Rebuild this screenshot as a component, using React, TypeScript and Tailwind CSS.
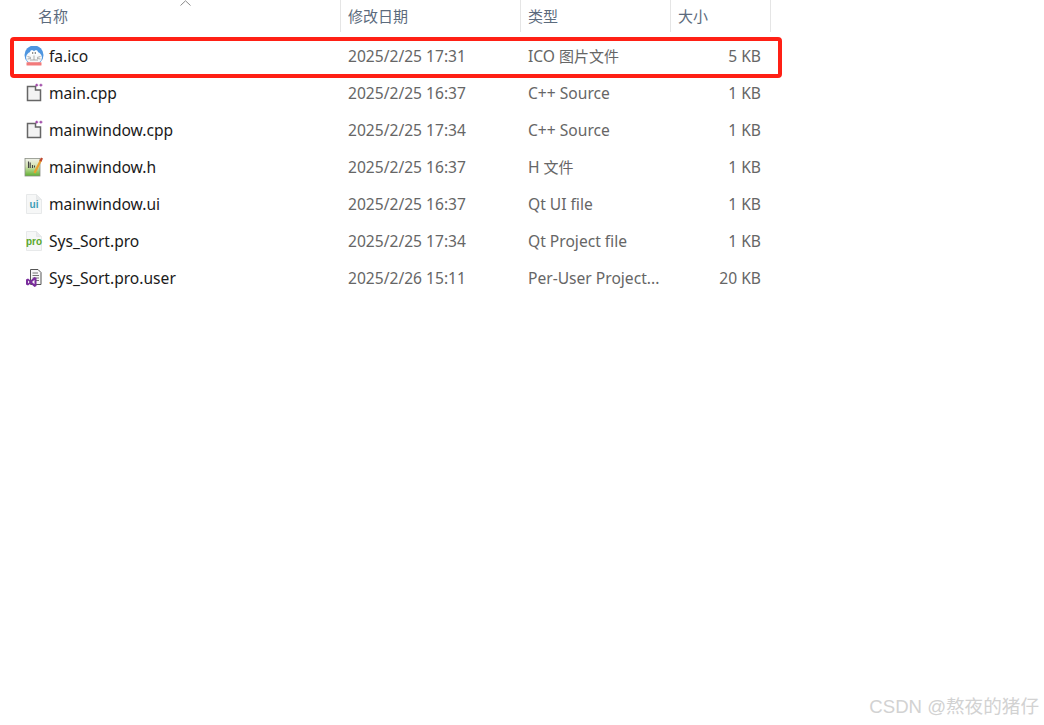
function DoraemonIcon() {
  return (
    <svg width="20" height="20" viewBox="0 0 20 20">
      <circle cx="10" cy="9" r="9.5" fill="#4f96e0" />
      <ellipse cx="10" cy="11.5" rx="8" ry="6.5" fill="#f7f8f9" />
      <ellipse cx="8" cy="6.5" rx="2" ry="2.6" fill="#fff" />
      <ellipse cx="12" cy="6.5" rx="2" ry="2.6" fill="#fff" />
      <circle cx="8.7" cy="7" r="0.7" fill="#444" />
      <circle cx="11.3" cy="7" r="0.7" fill="#444" />
      <path d="M3.5 10.5 7 11.5M3.5 13 7 12.5M13 11.5 16.5 10.5M13 12.5 16.5 13M10 9.5V14M6 14H14" stroke="#9a9a9a" strokeWidth="0.8" fill="none" />
      <rect x="2.5" y="16.2" width="15" height="3.3" rx="0.6" fill="#f27a7a" />
    </svg>
  )
}

function CppIcon() {
  return (
    <svg width="20" height="20" viewBox="0 0 20 20">
      <path d="M3.5 3.5H11.5V7H16.5V17.5H3.5Z" fill="#f3f3f3" stroke="#666666" strokeWidth="1.5" />
      <path d="M11.2 2.2H14.2M12.7 .8V3.6M15.4 2.2H18.4M16.9 .8V3.6" stroke="#a04aa8" strokeWidth="1.3" fill="none" />
    </svg>
  )
}

function HeaderFileIcon() {
  return (
    <svg width="20" height="20" viewBox="0 0 20 20">
      <defs>
        <linearGradient id="hgrad" x1="0" y1="0" x2="0" y2="1">
          <stop offset="0" stopColor="#f0f1ea" />
          <stop offset="0.45" stopColor="#d3e3b0" />
          <stop offset="1" stopColor="#5fb030" />
        </linearGradient>
      </defs>
      <rect x="1" y="1.5" width="15" height="17.5" fill="url(#hgrad)" stroke="#8a8f86" strokeWidth="0.8" />
      <path d="M4.5 4.5V11M6.2 5.5V11M8.5 8V11M10.5 8.5V10.5" stroke="#444" strokeWidth="1.1" fill="none" />
      <path d="M10.5 16 17 3" stroke="#e9a030" strokeWidth="2.2" fill="none" />
      <path d="M16.4 4.2 18 1" stroke="#c0492f" strokeWidth="2.2" fill="none" />
    </svg>
  )
}

function PageIcon({ label, color, size, width }: { label: string; color: string; size: number; width: number }) {
  return (
    <svg width="20" height="20" viewBox="0 0 20 20">
      <path d="M2.5 .5H12.5L17.5 5.5V19.5H2.5Z" fill="#f6f7f7" stroke="#e2e4e6" strokeWidth="0.8" />
      <path d="M12.5 .5V5.5H17.5" fill="#e9ebec" stroke="#e2e4e6" strokeWidth="0.8" />
      <text
        x="10"
        y="13.5"
        textAnchor="middle"
        fontSize={size}
        fontWeight="700"
        fill={color}
        textLength={width}
        lengthAdjust="spacingAndGlyphs"
        fontFamily="'Liberation Sans', sans-serif"
      >
        {label}
      </text>
    </svg>
  )
}

function VsUserIcon() {
  return (
    <svg width="20" height="20" viewBox="0 0 20 20">
      <path d="M6.5 1.5H14L17 4.5V16.5H6.5Z" fill="#f7f7f7" stroke="#555" strokeWidth="1" />
      <path d="M8.5 5H14M8.5 7.5H15M8.5 10H15M11 12.5H15" stroke="#666" strokeWidth="0.9" />
      <path d="M2 11.5 4 10.5 6.5 12.5 10.5 9 12.5 10V18L10.5 19 6.5 15.5 4 17.5 2 16.5ZM4 12.5V15.5L5.5 14ZM10.5 11.8 8 14 10.5 16.2Z" fill="#7a2d9c" fillRule="evenodd" />
    </svg>
  )
}

const cjk = "text-[15px]"

const files = [
  { name: "fa.ico", date: "2025/2/25 17:31", type: <>ICO <span className={cjk}>图片文件</span></>, size: "5 KB", icon: <DoraemonIcon /> },
  { name: "main.cpp", date: "2025/2/25 16:37", type: "C++ Source", size: "1 KB", icon: <CppIcon /> },
  { name: "mainwindow.cpp", date: "2025/2/25 17:34", type: "C++ Source", size: "1 KB", icon: <CppIcon /> },
  { name: "mainwindow.h", date: "2025/2/25 16:37", type: <>H <span className={cjk}>文件</span></>, size: "1 KB", icon: <HeaderFileIcon /> },
  { name: "mainwindow.ui", date: "2025/2/25 16:37", type: "Qt UI file", size: "1 KB", icon: <PageIcon label="ui" color="#3f9fb8" size={11} width={9} /> },
  { name: "Sys_Sort.pro", date: "2025/2/25 17:34", type: "Qt Project file", size: "1 KB", icon: <PageIcon label="pro" color="#5aa82c" size={10.5} width={16} /> },
  { name: "Sys_Sort.pro.user", date: "2025/2/26 15:11", type: "Per-User Project...", size: "20 KB", icon: <VsUserIcon /> },
]

export default function App() {
  return (
    <div className="relative w-[1044px] h-[725px] overflow-hidden bg-white font-['Noto_Sans','Noto_Sans_CJK_SC',sans-serif] text-[15.6px]">
      {/* Column headers */}
      <div className="flex h-[32px] w-[771px] text-[15px] text-[#5c6b7d]">
        <div className="relative w-[341px] pl-[38px] pt-[5px] border-r border-[#e5e5e5]">
          名称
          <svg className="absolute left-[180px] top-0" width="11" height="6" viewBox="0 0 11 6">
            <path d="M.5 5.5 5.5 .8 10.5 5.5" fill="none" stroke="#8a8a8a" />
          </svg>
        </div>
        <div className="w-[180px] pl-[7px] pt-[5px] border-r border-[#e5e5e5]">修改日期</div>
        <div className="w-[150px] pl-[7px] pt-[5px] border-r border-[#e5e5e5]">类型</div>
        <div className="w-[100px] pl-[7px] pt-[5px] border-r border-[#e5e5e5]">大小</div>
      </div>

      {/* File rows */}
      <div className="flex flex-col pt-[6px] w-[771px]">
        {files.map((f) => (
          <div key={f.name} className="flex h-[37px] items-center">
            <div className="w-[341px] flex items-center pl-[24px] gap-[5px] text-[#1a1a1a]">
              {f.icon}
              <span>{f.name}</span>
            </div>
            <div className="w-[180px] pl-[7px] text-[#666666] whitespace-nowrap">{f.date}</div>
            <div className="w-[150px] pl-[7px] text-[#666666] whitespace-nowrap">{f.type}</div>
            <div className="w-[100px] pr-[10px] text-right text-[#666666]">{f.size}</div>
          </div>
        ))}
      </div>

      {/* Red highlight */}
      <div className="absolute left-[10px] top-[37px] w-[772px] h-[41px] border-[4px] border-[#ff2015] rounded-[4px]" />

      {/* Watermark */}
      <div className="absolute right-[5px] bottom-[5px] text-[18.6px] leading-[26px] text-[#d2d2d2] font-['Liberation_Sans','Noto_Sans_CJK_SC',sans-serif]">
        CSDN @熬夜的猪仔
      </div>
    </div>
  )
}
